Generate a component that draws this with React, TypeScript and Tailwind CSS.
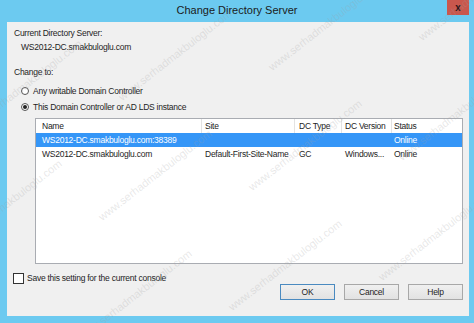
import React from "react";

/* ---------------------------------- DATA ---------------------------------- */
type Row = { name: string; site: string; type: string; version: string; status: string };

const rows: Row[] = [
  { name: "WS2012-DC.smakbuloglu.com:38389", site: "", type: "", version: "", status: "Online" },
  {
    name: "WS2012-DC.smakbuloglu.com",
    site: "Default-First-Site-Name",
    type: "GC",
    version: "Windows...",
    status: "Online",
  },
];

// watermark positions (bottom-left of each rotated line)
const marks = [
  [-30, 120], [120, 90], [270, 60], [420, 30],
  [-50, 240], [100, 210], [250, 180], [400, 150],
  [80, 330], [230, 300], [380, 270],
];

/* --------------------------------- PAGE ----------------------------------- */
export default function App() {
  const [mode, setMode] = React.useState(1);
  const [save, setSave] = React.useState(false);
  const [sel, setSel] = React.useState(0);

  return (
    <div className="relative flex h-[323px] w-[474px] flex-col overflow-hidden bg-[#6ccaf0] font-['Liberation_Sans',Arial,sans-serif] text-[8.5px] tracking-[-0.25px] text-[#1e1e1e]">
      {/* TITLE BAR */}
      <div className="grid h-[22px] shrink-0 grid-cols-[1fr_auto_1fr]">
        <div />
        <div className="pt-[4px] text-[11px] leading-[13px] tracking-normal text-[#1b1b1b]">
          Change Directory Server
        </div>
        <div className="flex justify-end pr-[5px]">
          <button className="flex h-[15px] w-[22px] items-center justify-center bg-[#c9574d] text-[10px] font-bold leading-none text-[#2a1010]">
            x
          </button>
        </div>
      </div>

      {/* CONTENT */}
      <div className="mb-[7px] ml-[7px] mr-[5px] flex flex-1 flex-col bg-[#f0f0f0]">
        <div className="ml-[7px] mt-[6px] h-[11px] leading-[11px]">Current Directory Server:</div>
        <div className="ml-[14px] mt-[3px] h-[11px] leading-[11px]">WS2012-DC.smakbuloglu.com</div>
        <div className="ml-[7px] mt-[14px] h-[11px] leading-[11px]">Change to:</div>

        <Radio
          className="mt-[7px]"
          label="Any writable Domain Controller"
          checked={mode === 0}
          onClick={() => setMode(0)}
        />
        <Radio
          className="mt-[4px]"
          label="This Domain Controller or AD LDS instance"
          checked={mode === 1}
          onClick={() => setMode(1)}
        />

        {/* LIST */}
        <div className="ml-[28px] mr-[6px] mt-[5px] h-[146px] border border-[#a9acb2] bg-white">
          <div className="grid h-[14px] grid-cols-[166px_93px_47px_50px_1fr] leading-[14px] text-[#222]">
            <div className="border-r border-[#e3e3e3] pl-[6px]">Name</div>
            <div className="border-r border-[#e3e3e3] pl-[3px]">Site</div>
            <div className="border-r border-[#e3e3e3] pl-[4px]">DC Type</div>
            <div className="border-r border-[#e3e3e3] pl-[3px]">DC Version</div>
            <div className="pl-[2px]">Status</div>
          </div>
          {rows.map((r, i) => (
            <div
              key={i}
              onClick={() => setSel(i)}
              className={`grid h-[14px] grid-cols-[166px_93px_47px_50px_1fr] leading-[14px] ${
                sel === i ? "bg-[#3596f7] text-white" : "text-[#1e1e1e]"
              }`}
            >
              <div className="pl-[6px]">{r.name}</div>
              <div className="pl-[3px]">{r.site}</div>
              <div className="pl-[4px]">{r.type}</div>
              <div className="pl-[3px]">{r.version}</div>
              <div className="pl-[2px]">{r.status}</div>
            </div>
          ))}
        </div>

        {/* CHECKBOX */}
        <label
          className="ml-[6px] mt-[8px] flex h-[12px] items-center gap-[3px]"
          onClick={() => setSave((s) => !s)}
        >
          <span className="flex h-[11px] w-[11px] items-center justify-center border border-[#333] bg-white text-[8px] leading-none">
            {save ? "✓" : ""}
          </span>
          <span>Save this setting for the current console</span>
        </label>

        {/* BUTTONS */}
        <div className="mr-[6px] flex justify-end gap-[9px]">
          <Btn label="OK" primary />
          <Btn label="Cancel" />
          <Btn label="Help" />
        </div>
      </div>

      {/* WATERMARK */}
      <div className="pointer-events-none absolute inset-0">
        {marks.map(([x, y], i) => (
          <span
            key={i}
            className="absolute origin-left -rotate-[38deg] whitespace-nowrap text-[11px] tracking-normal text-[#a0a0a0]/25"
            style={{ left: x, top: y }}
          >
            www.serhadmakbuloglu.com
          </span>
        ))}
      </div>
    </div>
  );
}

/* ------------------------------- PARTS ------------------------------------ */
function Radio({
  label,
  checked,
  onClick,
  className,
}: {
  label: string;
  checked: boolean;
  onClick: () => void;
  className: string;
}) {
  return (
    <div className={`ml-[14px] flex h-[12px] items-center gap-[4px] ${className}`} onClick={onClick}>
      <span className="flex h-[8px] w-[8px] items-center justify-center rounded-full border border-[#555] bg-white">
        {checked && <span className="h-[4px] w-[4px] rounded-full bg-[#222]" />}
      </span>
      <span className="leading-[12px]">{label}</span>
    </div>
  );
}

function Btn({ label, primary }: { label: string; primary?: boolean }) {
  return (
    <button
      className={`h-[16px] w-[55px] border bg-gradient-to-b from-[#f0f0f0] to-[#e2e2e2] text-center leading-[14px] text-[#1e1e1e] ${
        primary ? "border-[#4a8ac0]" : "border-[#a8a8a8]"
      }`}
    >
      {label}
    </button>
  );
}
